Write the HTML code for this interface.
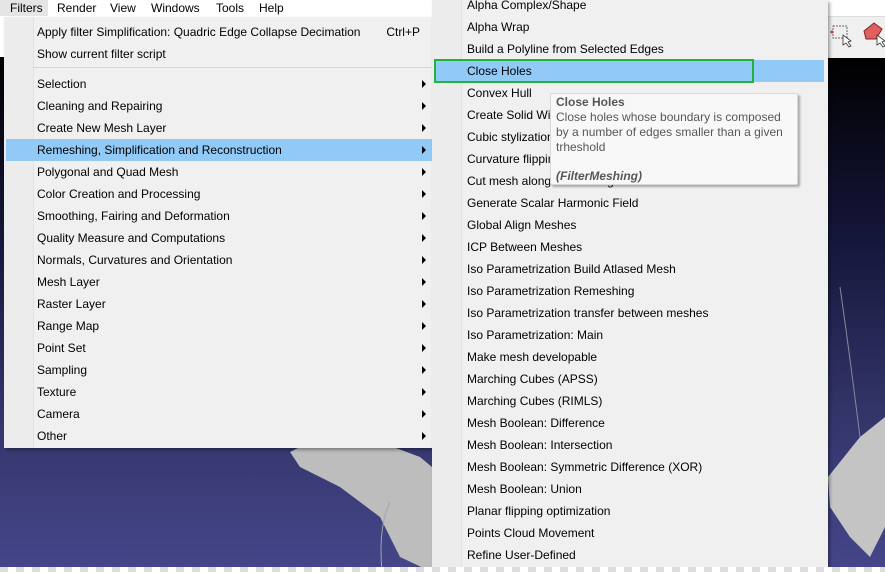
<!DOCTYPE html>
<html><head><style>
body{margin:0;width:885px;height:572px;overflow:hidden;position:relative;font-family:"Liberation Sans",sans-serif;font-size:12px;color:#000;background:#fff}
.vp{position:absolute;left:0;top:57px;width:885px;height:515px;background:linear-gradient(#000 0%,#15163a 35%,#34356a 70%,#45468a 100%)}
.bar{position:absolute;left:0;top:0;width:885px;height:16px;background:#fff}
.bar span{position:absolute;top:1px;line-height:15px}
.tb{position:absolute;left:828px;top:16px;width:57px;height:41px;background:#f0f0f0;border-top:1px solid #ddd}
.menu{position:absolute;background:#f0f0f0;box-shadow:2px 2px 3px rgba(0,0,0,.35)}
.it{position:absolute;left:0;right:0;height:22px;line-height:22px;white-space:nowrap}
.arr{position:absolute;right:6px;top:7px;width:0;height:0;border-left:4px solid #000;border-top:4px solid transparent;border-bottom:4px solid transparent}
.bot{position:absolute;left:0;top:567px;width:885px;height:5px;background:repeating-linear-gradient(90deg,#ddd 0 8px,#fff 8px 16px)}
</style></head><body>
<div class="vp">
<svg width="885" height="515" style="position:absolute;left:0;top:0">
<polygon points="290,395 320,380 380,385 420,400 432,410 432,515 400,500 380,460 340,430 300,410" fill="#bdbdbd"/>
<polygon points="828,420 860,380 885,360 885,470 870,500 850,480 830,450" fill="#c4c4c4"/>
<path d="M382,515 Q378,470 390,445" stroke="#9aa" fill="none"/>
<path d="M840,230 Q850,300 860,380" stroke="#889" fill="none"/>
</svg>
</div>
<div class="bar">
<span style="left:0;top:0;width:48px;height:16px;background:#e5e5e5"></span>
<span style="left:10px">Filters</span><span style="left:57px">Render</span><span style="left:110px">View</span><span style="left:151px">Windows</span><span style="left:216px">Tools</span><span style="left:259px">Help</span>
</div>
<div class="tb">
<svg width="57" height="41"><rect x="5" y="9" width="14" height="12" fill="none" stroke="#666" stroke-dasharray="2,1"/><circle cx="4" cy="15" r="1.5" fill="#c33"/><path d="M15,18 l0,10 l3,-2 l3,4 l2,-1 l-3,-4 l3,-1z" fill="#fff" stroke="#333" stroke-width=".8"/><polygon points="36,14 46,6 54,12 48,22 38,22" fill="#e06060" stroke="#822"/><path d="M49,18 l0,10 l3,-2 l3,4 l2,-1 l-3,-4 l3,-1z" fill="#fff" stroke="#333" stroke-width=".8"/></svg>
</div>
<div class="menu" style="left:4px;top:17px;width:428px;height:431px">
<div style="position:absolute;left:0;top:0;width:29px;height:431px;background:#ececec;border-right:1px solid #e2e2e2"></div>
<div style="position:absolute;left:29px;right:0;top:50px;height:1px;background:#d5d5d5"></div>
<div class="it" style="top:122px;left:2px;background:#91c9f7"></div>
<div style="position:absolute;left:33px;top:1px;right:0">
<div class="it" style="top:3px">Apply filter Simplification: Quadric Edge Collapse Decimation<span style="position:absolute;right:12px">Ctrl+P</span></div>
<div class="it" style="top:25px">Show current filter script</div>
<div class="it" style="top:55px">Selection<i class="arr"></i></div>
<div class="it" style="top:77px">Cleaning and Repairing<i class="arr"></i></div>
<div class="it" style="top:99px">Create New Mesh Layer<i class="arr"></i></div>
<div class="it" style="top:121px">Remeshing, Simplification and Reconstruction<i class="arr"></i></div>
<div class="it" style="top:143px">Polygonal and Quad Mesh<i class="arr"></i></div>
<div class="it" style="top:165px">Color Creation and Processing<i class="arr"></i></div>
<div class="it" style="top:187px">Smoothing, Fairing and Deformation<i class="arr"></i></div>
<div class="it" style="top:209px">Quality Measure and Computations<i class="arr"></i></div>
<div class="it" style="top:231px">Normals, Curvatures and Orientation<i class="arr"></i></div>
<div class="it" style="top:253px">Mesh Layer<i class="arr"></i></div>
<div class="it" style="top:275px">Raster Layer<i class="arr"></i></div>
<div class="it" style="top:297px">Range Map<i class="arr"></i></div>
<div class="it" style="top:319px">Point Set<i class="arr"></i></div>
<div class="it" style="top:341px">Sampling<i class="arr"></i></div>
<div class="it" style="top:363px">Texture<i class="arr"></i></div>
<div class="it" style="top:385px">Camera<i class="arr"></i></div>
<div class="it" style="top:407px">Other<i class="arr"></i></div>
</div>
</div>
<div class="menu" style="left:432px;top:0;width:396px;height:567px">
<div style="position:absolute;left:0;top:0;width:29px;height:567px;background:#ececec;border-right:1px solid #e2e2e2"></div>
<div class="it" style="top:60px;left:2px;right:4px;background:#91c9f7"></div>
<div style="position:absolute;left:2px;top:59px;width:316px;height:20px;border:2px solid #22b33a"></div>
<div style="position:absolute;left:35px;top:-1px;right:0">
<div class="it" style="top:-5px">Alpha Complex/Shape</div>
<div class="it" style="top:17px">Alpha Wrap</div>
<div class="it" style="top:39px">Build a Polyline from Selected Edges</div>
<div class="it" style="top:61px">Close Holes</div>
<div class="it" style="top:83px">Convex Hull</div>
<div class="it" style="top:105px">Create Solid Wireframe</div>
<div class="it" style="top:127px">Cubic stylization</div>
<div class="it" style="top:149px">Curvature flipping optimization</div>
<div class="it" style="top:171px">Cut mesh along crease edges</div>
<div class="it" style="top:193px">Generate Scalar Harmonic Field</div>
<div class="it" style="top:215px">Global Align Meshes</div>
<div class="it" style="top:237px">ICP Between Meshes</div>
<div class="it" style="top:259px">Iso Parametrization Build Atlased Mesh</div>
<div class="it" style="top:281px">Iso Parametrization Remeshing</div>
<div class="it" style="top:303px">Iso Parametrization transfer between meshes</div>
<div class="it" style="top:325px">Iso Parametrization: Main</div>
<div class="it" style="top:347px">Make mesh developable</div>
<div class="it" style="top:369px">Marching Cubes (APSS)</div>
<div class="it" style="top:391px">Marching Cubes (RIMLS)</div>
<div class="it" style="top:413px">Mesh Boolean: Difference</div>
<div class="it" style="top:435px">Mesh Boolean: Intersection</div>
<div class="it" style="top:457px">Mesh Boolean: Symmetric Difference (XOR)</div>
<div class="it" style="top:479px">Mesh Boolean: Union</div>
<div class="it" style="top:501px">Planar flipping optimization</div>
<div class="it" style="top:523px">Points Cloud Movement</div>
<div class="it" style="top:545px">Refine User-Defined</div>
</div>
</div>
<div style="position:absolute;left:550px;top:93px;width:246px;height:90px;background:#f8f8f8;border:1px solid #d8d8d8;border-radius:2px;box-shadow:2px 2px 2px rgba(0,0,0,.3);color:#575757;font-size:12px;line-height:15px">
<div style="position:absolute;left:5px;top:1px;font-weight:bold">Close Holes</div>
<div style="position:absolute;left:5px;top:16px;width:240px">Close holes whose boundary is composed by a number of edges smaller than a given trheshold</div>
<div style="position:absolute;left:5px;top:75px;font-weight:bold;font-style:italic">(FilterMeshing)</div>
</div>
<div class="bot"></div>
</body></html>
